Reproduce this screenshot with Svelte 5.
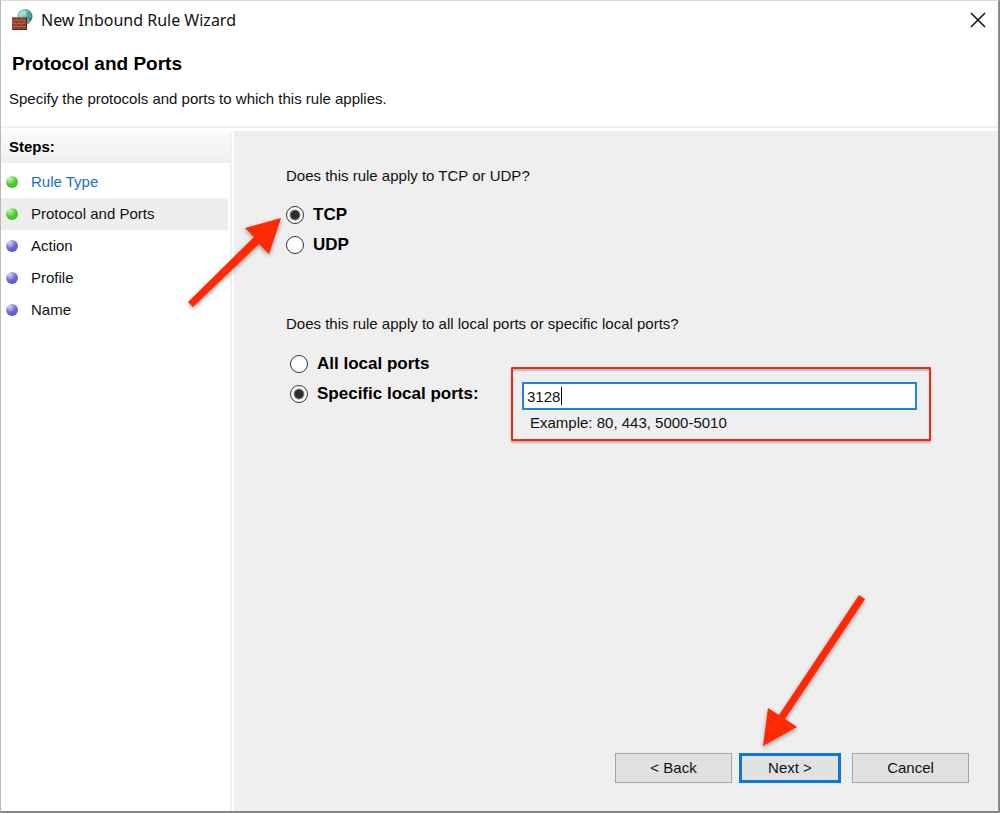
<script lang="ts">
  const steps = [
    { label: 'Rule Type', done: true, link: true },
    { label: 'Protocol and Ports', done: true, current: true },
    { label: 'Action' },
    { label: 'Profile' },
    { label: 'Name' },
  ];

  let protocol = $state('tcp');
  let scope = $state('specific');
  let ports = $state('3128');
</script>

<div class="window">
  <header>
    <div class="titlebar">
      <svg class="app-icon" width="22" height="22" viewBox="0 0 22 22" aria-hidden="true">
        <defs>
          <radialGradient id="globe" cx="0.4" cy="0.3" r="0.8">
            <stop offset="0" stop-color="#b4e4fb" />
            <stop offset="0.5" stop-color="#3b97dc" />
            <stop offset="1" stop-color="#1a3f96" />
          </radialGradient>
        </defs>
        <circle cx="14" cy="7.5" r="7.5" fill="url(#globe)" />
        <path d="M8 4l4-3 3 1-1 3-3 1-1 3-3 0z" fill="#a5e3c0" />
        <path d="M16 2l3 2 2 4-2 1-3-3zM15 8l4 3-1 4-3-1z" fill="#4fb646" />
        <path d="M1 8h15v13H1z" fill="#8d3b2b" />
        <path
          d="M1 8.5h15M1 11.5h15M1 14.5h15M1 17.5h15M5 9v2M11 9v2M3 12v2M8 12v2M13 12v2M5 15v2M11 15v2M3 18v2M8 18v2M13 18v2"
          stroke="#b9705a"
          stroke-width="0.7"
          fill="none"
        />
        <path d="M1 20.5h14.5V8" stroke="#5c2118" fill="none" />
      </svg>
      <span class="caption">New Inbound Rule Wizard</span>
      <button class="close" aria-label="Close">
        <svg width="16" height="16" viewBox="0 0 16 16">
          <path d="M1 1l14 14M15 1L1 15" stroke="#111" stroke-width="1.5" />
        </svg>
      </button>
    </div>
    <h1>Protocol and Ports</h1>
    <p>Specify the protocols and ports to which this rule applies.</p>
  </header>

  <div class="body">
    <nav aria-labelledby="steps-title">
      <h2 id="steps-title">Steps:</h2>
      <ul>
        {#each steps as step}
          <li class:current={step.current}>
            <span class="dot" class:done={step.done}></span>
            {#if step.link}
              <a href="#rule-type">{step.label}</a>
            {:else}
              <span>{step.label}</span>
            {/if}
          </li>
        {/each}
      </ul>
    </nav>

    <main>
      <fieldset>
        <legend>Does this rule apply to TCP or UDP?</legend>
        <div class="protocols">
          <label>
            <input type="radio" name="protocol" value="tcp" bind:group={protocol} />
            TCP
          </label>
          <label>
            <input type="radio" name="protocol" value="udp" bind:group={protocol} />
            UDP
          </label>
          <svg class="arrow to-tcp" width="100" height="100" viewBox="0 0 100 100" aria-hidden="true">
            <path d="M96 8L60 18L69 27L3 92L8 97L74 34L84 44Z" />
          </svg>
        </div>
      </fieldset>

      <fieldset>
        <legend>Does this rule apply to all local ports or specific local ports?</legend>
        <div class="ports">
          <div class="scope">
            <label>
              <input type="radio" name="scope" value="all" bind:group={scope} />
              All local ports
            </label>
            <label>
              <input type="radio" name="scope" value="specific" bind:group={scope} />
              Specific local ports:
            </label>
          </div>
          <div class="highlight">
            <div class="field">
              <input
                type="text"
                aria-label="Specific local ports"
                aria-describedby="ports-example"
                bind:value={ports}
              />
              <span class="caret"></span>
            </div>
            <div id="ports-example" class="example">Example: 80, 443, 5000-5010</div>
          </div>
        </div>
      </fieldset>

      <footer>
        <button>&lt; Back</button>
        <div class="next">
          <button class="default">Next &gt;</button>
          <svg class="arrow to-next" width="110" height="160" viewBox="0 0 110 160" aria-hidden="true">
            <path d="M4 156L9 118L20 125L100 5L106 9L26 129L38 137Z" />
          </svg>
        </div>
        <button>Cancel</button>
      </footer>
    </main>
  </div>
</div>

<style>
  :global(body) {
    background: #fff;
  }

  .window {
    box-sizing: border-box;
    min-height: 100vh;
    display: flex;
    flex-direction: column;
    border: 1px solid #b9b9b9;
    border-top-color: #d9d9d9;
    border-right: 2px solid #8a8a8a;
    border-bottom: 2px solid #858585;
    background: #fff;
    color: #111;
    font: 15px/20px 'Liberation Sans', Arial, sans-serif;
  }

  header {
    height: 125px;
    border-bottom: 2px solid #f0f0f0;
  }

  .titlebar {
    display: flex;
    align-items: center;
    height: 38px;
    padding: 0 12px 0 10px;
  }

  .app-icon {
    flex: none;
  }

  .caption {
    flex: 1;
    margin-left: 8px;
    font-family: 'Noto Sans', 'Open Sans', sans-serif;
    font-size: 16px;
  }

  .close {
    display: flex;
    padding: 0;
    border: 0;
    background: none;
  }

  h1 {
    margin: 15px 0 0 11px;
    color: #000;
    font: bold 19px/20px 'Liberation Sans', Arial, sans-serif;
  }

  header p {
    margin: 15px 0 0 8px;
  }

  .body {
    flex: 1;
    display: flex;
    padding-top: 3px;
  }

  nav {
    flex: none;
    width: 229px;
    margin-right: 2px;
    border-right: 2px solid #f0f0f0;
  }

  h2 {
    margin: 0;
    padding-left: 8px;
    background: linear-gradient(#fbfbfb, #eee);
    color: #000;
    font: bold 15px/32px 'Liberation Sans', Arial, sans-serif;
  }

  ul {
    margin: 0;
    padding: 3px 2px 0 0;
    list-style: none;
  }

  li {
    display: flex;
    align-items: center;
    height: 32px;
    padding-left: 5px;
  }

  li.current {
    background: #eee;
  }

  .dot {
    width: 12px;
    height: 12px;
    margin-right: 13px;
    border-radius: 50%;
    background: radial-gradient(circle at 30% 20%, #d4daf4 0, #6a69cf 50%, #5855b8 100%);
  }

  .dot.done {
    background: radial-gradient(circle at 30% 20%, #c9f5bd 0, #4fca34 50%, #44b52b 100%);
  }

  a {
    color: #1570d6;
    text-decoration: none;
  }

  main {
    flex: 1;
    display: flex;
    flex-direction: column;
    padding: 35px 0 28px;
    background: #efefef;
  }

  fieldset {
    min-width: 0;
    margin: 0 0 54px;
    padding: 0;
    border: 0;
  }

  legend {
    padding: 0 0 0 52px;
  }

  label {
    display: flex;
    align-items: center;
    height: 30px;
    color: #000;
    font: bold 17px/20px 'Liberation Sans', Arial, sans-serif;
  }

  input[type='radio'] {
    appearance: none;
    box-sizing: border-box;
    width: 18px;
    height: 18px;
    margin: 0 9px 0 0;
    border: 1px solid #333;
    border-radius: 50%;
    background: #fff;
  }

  input[type='radio']:checked {
    background: radial-gradient(circle, #2d2d2d 4px, #fff 6px);
  }

  .protocols {
    position: relative;
    padding: 14px 0 0 52px;
  }

  .ports {
    display: flex;
    padding: 15px 67px 0 56px;
  }

  .scope {
    flex: 0 0 221px;
  }

  .highlight {
    flex: 1;
    min-width: 0;
    margin-top: 18px;
    padding: 13px 12px 6px 9px;
    border: 2px solid #ee2a12;
    border-radius: 1px;
    box-shadow: 0 2px 2px rgba(0, 0, 0, 0.25), inset 0 2px 1px rgba(0, 0, 0, 0.2);
  }

  .field {
    position: relative;
  }

  input[type='text'] {
    display: block;
    box-sizing: border-box;
    width: 100%;
    height: 28px;
    padding: 0 3px;
    border: 2px solid #1a86dc;
    outline: 0;
    background: #fff;
    color: inherit;
    font: inherit;
  }

  .caret {
    position: absolute;
    top: 5px;
    left: 39px;
    width: 1px;
    height: 18px;
    background: #000;
  }

  .example {
    margin: 3px 0 0 8px;
  }

  footer {
    display: flex;
    justify-content: flex-end;
    margin-top: auto;
    padding-right: 29px;
  }

  footer button {
    box-sizing: border-box;
    width: 117px;
    height: 30px;
    padding: 0;
    border: 1px solid #a5a5a5;
    background: #e1e1e1;
    color: inherit;
    font: inherit;
  }

  footer .default {
    width: 102px;
    border: 3px solid #0a78d7;
  }

  .next {
    position: relative;
    margin: 0 11px 0 7px;
  }

  /* annotation arrows, anchored to the control they point at */
  .arrow {
    position: absolute;
    fill: #ff2a04;
    filter: drop-shadow(0 2px 2px rgba(0, 0, 0, 0.35));
    pointer-events: none;
  }

  .to-tcp {
    top: 24px;
    left: -49px;
  }

  .to-next {
    bottom: 33px;
    left: 20px;
  }
</style>
